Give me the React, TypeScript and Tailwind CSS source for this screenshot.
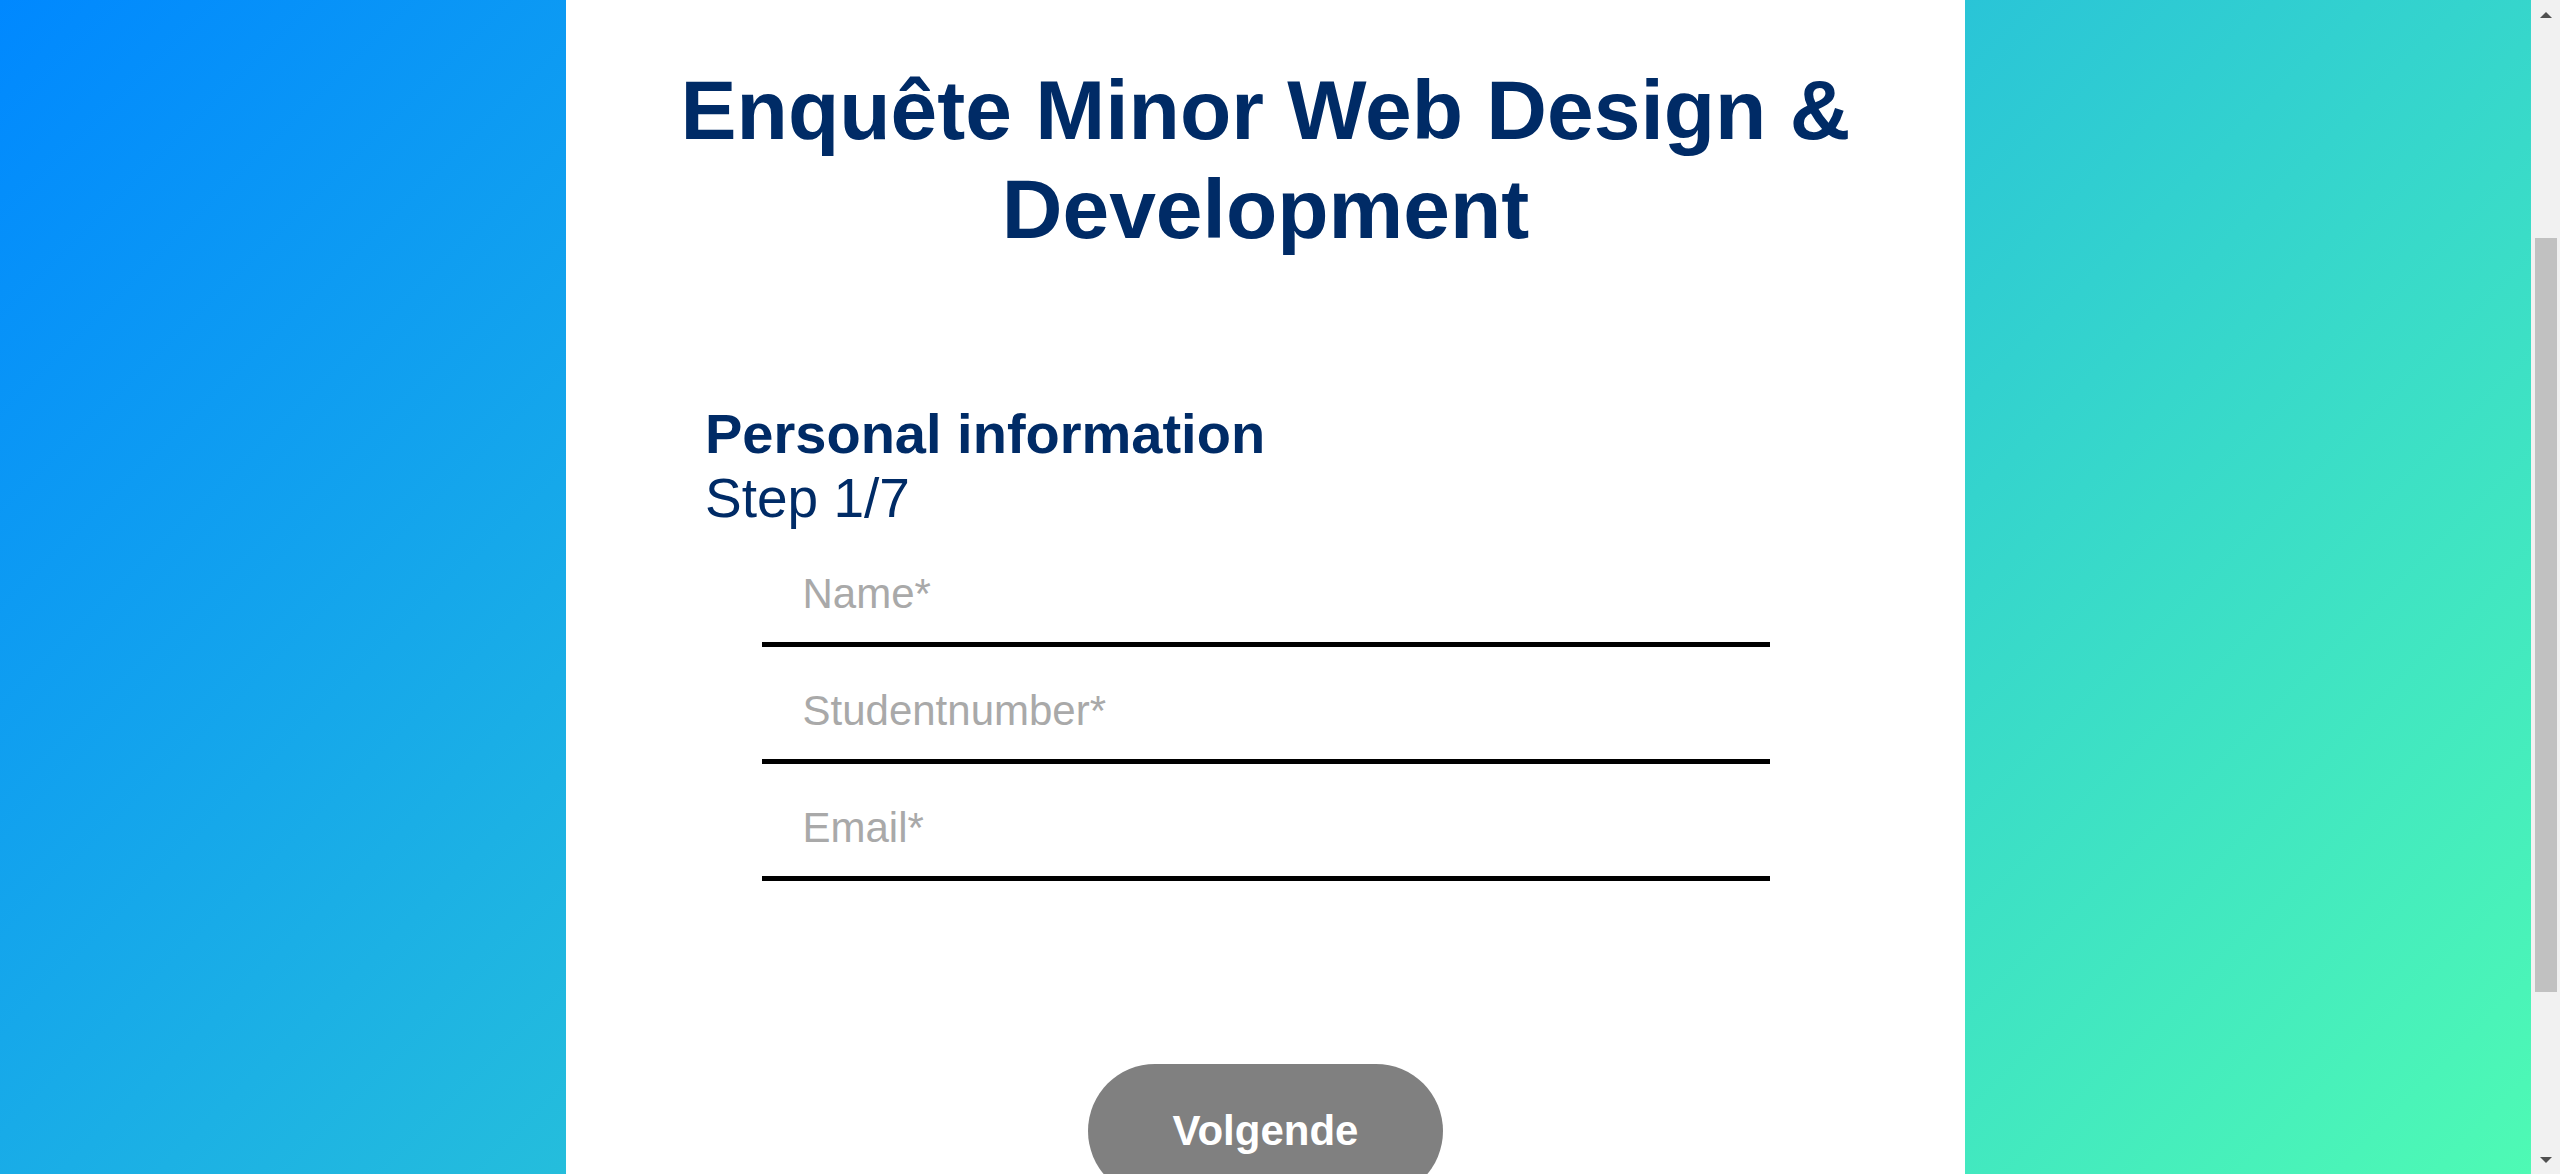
import React from "react";

const fields = ["Name*", "Studentnumber*", "Email*"];

function FakeScrollbar() {
  return (
    <aside className="flex w-[29px] shrink-0 flex-col bg-[#f1f1f1]">
      <div className="flex h-[29px] items-center justify-center">
        <span className="h-0 w-0 border-x-[6px] border-b-[6px] border-x-transparent border-b-[#505050]" />
      </div>
      <div className="flex-1 pt-[209px]">
        <div className="mx-auto h-[754px] w-[22px] bg-[#c1c1c1]" />
      </div>
      <div className="flex h-[29px] items-center justify-center">
        <span className="h-0 w-0 border-x-[6px] border-t-[6px] border-x-transparent border-t-[#505050]" />
      </div>
    </aside>
  );
}

export default function App() {
  return (
    <div className="flex h-screen overflow-hidden font-['Liberation_Sans',Arial,sans-serif]">
      <div className="flex flex-1 justify-center bg-[linear-gradient(135deg,#0088ff_0%,#4efab4_100%)]">
        <main className="w-[1399px] bg-white pt-[61px]">
          <h1 className="px-[60px] text-center text-[84px] font-bold leading-[99px] text-[#002b66]">
            Enquête Minor Web Design &amp; Development
          </h1>

          <form className="mt-[143px]" onSubmit={(e) => e.preventDefault()}>
            <div className="pl-[139px] text-[#002b66]">
              <h2 className="text-[56px] font-bold leading-[64px]">
                Personal information
              </h2>
              <p className="text-[55px] leading-[64px]">Step 1/7</p>
            </div>

            <div className="mx-auto flex w-[1008px] flex-col">
              {fields.map((f) => (
                <input
                  key={f}
                  type="text"
                  placeholder={f}
                  className="box-border h-[117px] w-full border-0 border-b-[5px] border-solid border-black bg-transparent pt-[40px] pb-[24px] pl-[41px] text-[42px] leading-[48px] text-black outline-none placeholder:text-[#a9a9a9]"
                />
              ))}
            </div>

            <div className="mt-[183px] flex justify-center">
              <button
                type="submit"
                className="rounded-full border-0 bg-[#808080] px-[85px] py-[43px] text-[42px] font-bold leading-[48px] text-white"
              >
                Volgende
              </button>
            </div>
          </form>
        </main>
      </div>
      <FakeScrollbar />
    </div>
  );
}
